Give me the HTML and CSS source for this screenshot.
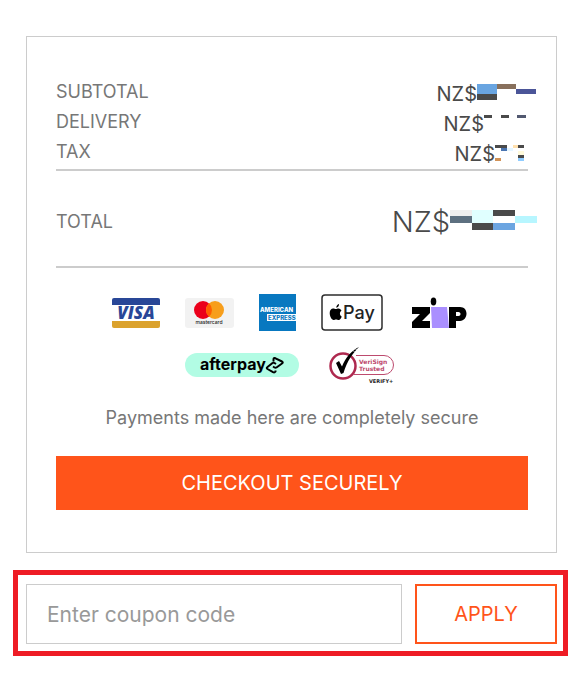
FILE: index.html
```html
<!DOCTYPE html>
<html lang="en">
<head>
<meta charset="utf-8">
<meta name="viewport" content="width=device-width, initial-scale=1">
<title>Order summary</title>
<link rel="stylesheet" href="styles.css">
</head>
<body>
<main>
  <section class="card">
    <dl class="summary">
      <div class="row">
        <dt>SUBTOTAL</dt>
        <dd>NZ$<svg class="mask" width="51" height="18" aria-hidden="true" shape-rendering="crispEdges"><path fill="#69a5e1" d="M0 0h20v10H0z"/><path fill="#4a4a4a" d="M0 10h20v6H0z"/><path fill="#88705c" d="M20 0h19v5H20z"/><path fill="#4b5598" d="M39 5h20v5H39z"/></svg></dd>
      </div>
      <div class="row">
        <dt>DELIVERY</dt>
        <dd>NZ$<svg class="mask" width="44" height="18" aria-hidden="true" shape-rendering="crispEdges"><path fill="#4a4a4a" d="M0 1h8v3H0zM17 1h8v3h-8z"/><path fill="#525970" d="M33 1h9v3h-9z"/></svg></dd>
      </div>
      <div class="row">
        <dt>TAX</dt>
        <dd>NZ$<svg class="mask" width="33" height="18" aria-hidden="true" shape-rendering="crispEdges"><path fill="#4a4a4a" d="M0 1h12v3H0zM23 1h6v3h-6zM23 11h6v3h-6z"/><path fill="#4a74b0" d="M6 4h6v3H6z"/><path fill="#e5f6ff" d="M12 4h6v3h-6z"/><path fill="#ffe0ae" d="M18 1h5v3h-5z"/><path fill="#fffadb" d="M23 7h6v4h-6z"/><path fill="#90ccff" d="M23 14h6v3h-6z"/><path fill="#d19257" d="M0 14h6v3H0z"/></svg></dd>
      </div>
      <div class="row total">
        <dt>TOTAL</dt>
        <dd>NZ$<svg class="mask" width="78" height="24" aria-hidden="true" shape-rendering="crispEdges"><path fill="#eee" d="M0 0h22v6H0z"/><path fill="#5d7080" d="M0 6h22v7H0z"/><path fill="#e0ffff" d="M22 0h21v13H22z"/><path fill="#4a4a4a" d="M43 0h22v6H43zM22 13h21v7H22z"/><path fill="#6ba5e1" d="M43 13h22v7H43z"/><path fill="#b7f6ff" d="M65 6h22v7H65z"/></svg></dd>
      </div>
    </dl>
    <div class="methods">
      <div class="line">
        <svg width="48" height="30" role="img" aria-label="Visa"><rect width="48" height="30" rx="2" fill="#fff"/><path fill="#294797" d="M2 0h44a2 2 0 0 1 2 2v5H0V2a2 2 0 0 1 2-2z"/><path fill="#dba22d" d="M0 23h48v5a2 2 0 0 1-2 2H2a2 2 0 0 1-2-2z"/><text class="visa" x="24" y="21" text-anchor="middle">VISA</text></svg>
        <svg width="49" height="30" role="img" aria-label="Mastercard"><rect width="49" height="30" rx="3" fill="#f2f2f2"/><circle cx="18" cy="12" r="9" fill="#eb001b"/><circle cx="30" cy="12" r="9" fill="#f79e1b"/><path fill="#ff5f00" d="M24 5.3a9 9 0 0 1 0 13.4 9 9 0 0 1 0-13.4z"/><text class="mc" x="24" y="26" text-anchor="middle">mastercard</text></svg>
        <svg width="37" height="37" role="img" aria-label="American Express"><rect width="37" height="37" fill="#0878c0"/><path fill="#fff" d="M8 20h29v7H8z"/><text class="amex" x="1" y="18">AMERICAN</text><text class="amex blue" x="9" y="26">EXPRESS</text></svg>
        <svg width="62" height="37" role="img" aria-label="Apple Pay"><rect x="1" y="1" width="60" height="35" rx="3" fill="#fff" stroke="#2d2d2d" stroke-width="1.5"/><path d="M15.300 13.800c-.1-1.400 1-3.200 2.700-3.700.2 1.800-1 3.500-2.700 3.700zM17.500 14.500c-1.200 0-1.700.6-2.600.6-.9 0-1.700-.6-2.800-.6-1.800 0-3.400 1.600-3.400 4.600 0 3.500 2.100 6.900 3.800 6.900 1 0 1.500-.6 2.600-.6s1.600.6 2.600.6c1.400 0 2.600-2.100 3-3.600-2.200-1-2.400-4.400-.2-5.700-.8-1.400-1.900-2.200-3-2.200z"/><text class="pay" x="22" y="25">Pay</text></svg>
        <svg class="zip" width="56" height="34" role="img" aria-label="Zip"><path d="M0 11h18v6l-8 8h8v7H0v-6l8-8H0z"/><path fill="#aa8fff" d="M19 11h16l2 21H20z"/><ellipse cx="21.500" cy="5.500" rx="2.800" ry="4"/><path fill-rule="evenodd" d="M37 11h11c4 0 6.500 2.800 6.500 6.500S52 25 48 25h-4v7h-7zm7 5v4h2.500c2.700 0 2.700-4 0-4z"/></svg>
      </div>
      <div class="line second">
        <svg width="114" height="24" role="img" aria-label="Afterpay"><rect width="114" height="24" rx="12" fill="#b2fce4"/><text class="afterpay" x="15" y="17">afterpay</text><path fill="none" stroke="#000" stroke-width="2" stroke-linejoin="round" d="M88.500 8.500V6.500q0-2 2-1.200l6.500 3.200q1.500 1 0 2l-5.500 4q-1 .6-2 0l-1.500-1M90.500 17.500v1q-1 1.500-2.500.7l-5.500-3.200q-1.500-1 0-2l5-4q1-.6 2 0l1.500 1"/></svg>
        <svg width="66" height="38" role="img" aria-label="VeriSign Trusted"><path fill="none" stroke="#bd4a6e" d="M27 9.500h28a9.500 9.500 0 0 1 0 19H25"/><circle cx="14" cy="20" r="12.500" fill="#fff" stroke="#ae294f" stroke-width="2.500"/><path d="M7 17l3-2 3 5.500C17 11 22 5 30 1 24 7 18 15 14.500 27L12 28z"/><path stroke="#fff" stroke-width=".6" d="M22 3l5 4M24 1l5 4"/><text class="seal" x="30" y="18">VeriSign</text><text class="seal" x="30" y="25">Trusted</text><text class="verify" x="40" y="37">VERIFY+</text></svg>
      </div>
    </div>
    <p class="note">Payments made here are completely secure</p>
    <button class="checkout" type="button">CHECKOUT SECURELY</button>
  </section>
  <form class="coupon">
    <input type="text" placeholder="Enter coupon code" aria-label="Enter coupon code">
    <button class="apply" type="button">APPLY</button>
  </form>
</main>
</body>
</html>
```
FILE: styles.css
```css
* { box-sizing: border-box; }
body {
  margin: 0;
  padding: 36px 16px 22px 13px;
  background: #fff;
  color: #777;
  font: 18px/20px Inter, "Liberation Sans", sans-serif;
}
.card {
  margin: 0 11px 17px 13px;
  padding: 40px 28px 42px 29px;
  border: 1px solid #ccc;
}
.summary { margin: 0; }
.row {
  display: flex;
  justify-content: space-between;
  align-items: center;
  height: 30px;
}
dd {
  display: flex;
  margin: 0;
  padding-top: 3px;
  color: #4a4a4a;
  font-size: 20px;
}
.mask { overflow: visible; }
.total {
  height: 99px;
  margin-top: 2px;
  padding-top: 6px;
  border: solid #ccc;
  border-width: 2px 0;
}
.total dd {
  padding-top: 0;
  font-size: 29px;
  font-weight: 300;
  line-height: 24px;
}
.methods {
  display: flex;
  flex-direction: column;
  gap: 15px;
  padding: 26px 4px 0 0;
}
.line {
  display: flex;
  justify-content: center;
  align-items: center;
  gap: 25px;
}
.second { gap: 30px; }
.zip { margin-left: 4px; }
.visa { font: italic 800 17px "Open Sans", sans-serif; fill: #294797; }
.mc { font: 500 5px Inter, sans-serif; fill: #222; }
.amex { font: 800 6px Inter, sans-serif; fill: #fff; }
.blue { fill: #0878c0; }
.pay { font: 500 18px Inter, sans-serif; fill: #222; }
.afterpay { font: 700 16px Inter, sans-serif; fill: #000; }
.seal { font: 700 6px "DejaVu Sans", sans-serif; fill: #bd4a6e; }
.verify { font: 700 5px "DejaVu Sans", sans-serif; fill: #222; }
.note {
  margin: 24px 0 28px;
  text-align: center;
}
button, input {
  border-radius: 0;
  font-family: inherit;
  font-size: 20px;
}
.checkout {
  display: block;
  width: 100%;
  height: 54px;
  border: 0;
  background: #ff541a;
  color: #fff;
}
.coupon {
  display: flex;
  gap: 13px;
  padding: 9px 6px 7px 8px;
  border: 5px solid #ee1c25;
}
.coupon input {
  flex: 1;
  min-width: 0;
  height: 60px;
  padding: 0 20px;
  border: 1px solid #ccc;
  font-size: 21px;
}
.coupon input::placeholder { color: #999; }
.apply {
  width: 142px;
  border: 2px solid #ff541a;
  background: #fff;
  color: #ff541a;
}
```
